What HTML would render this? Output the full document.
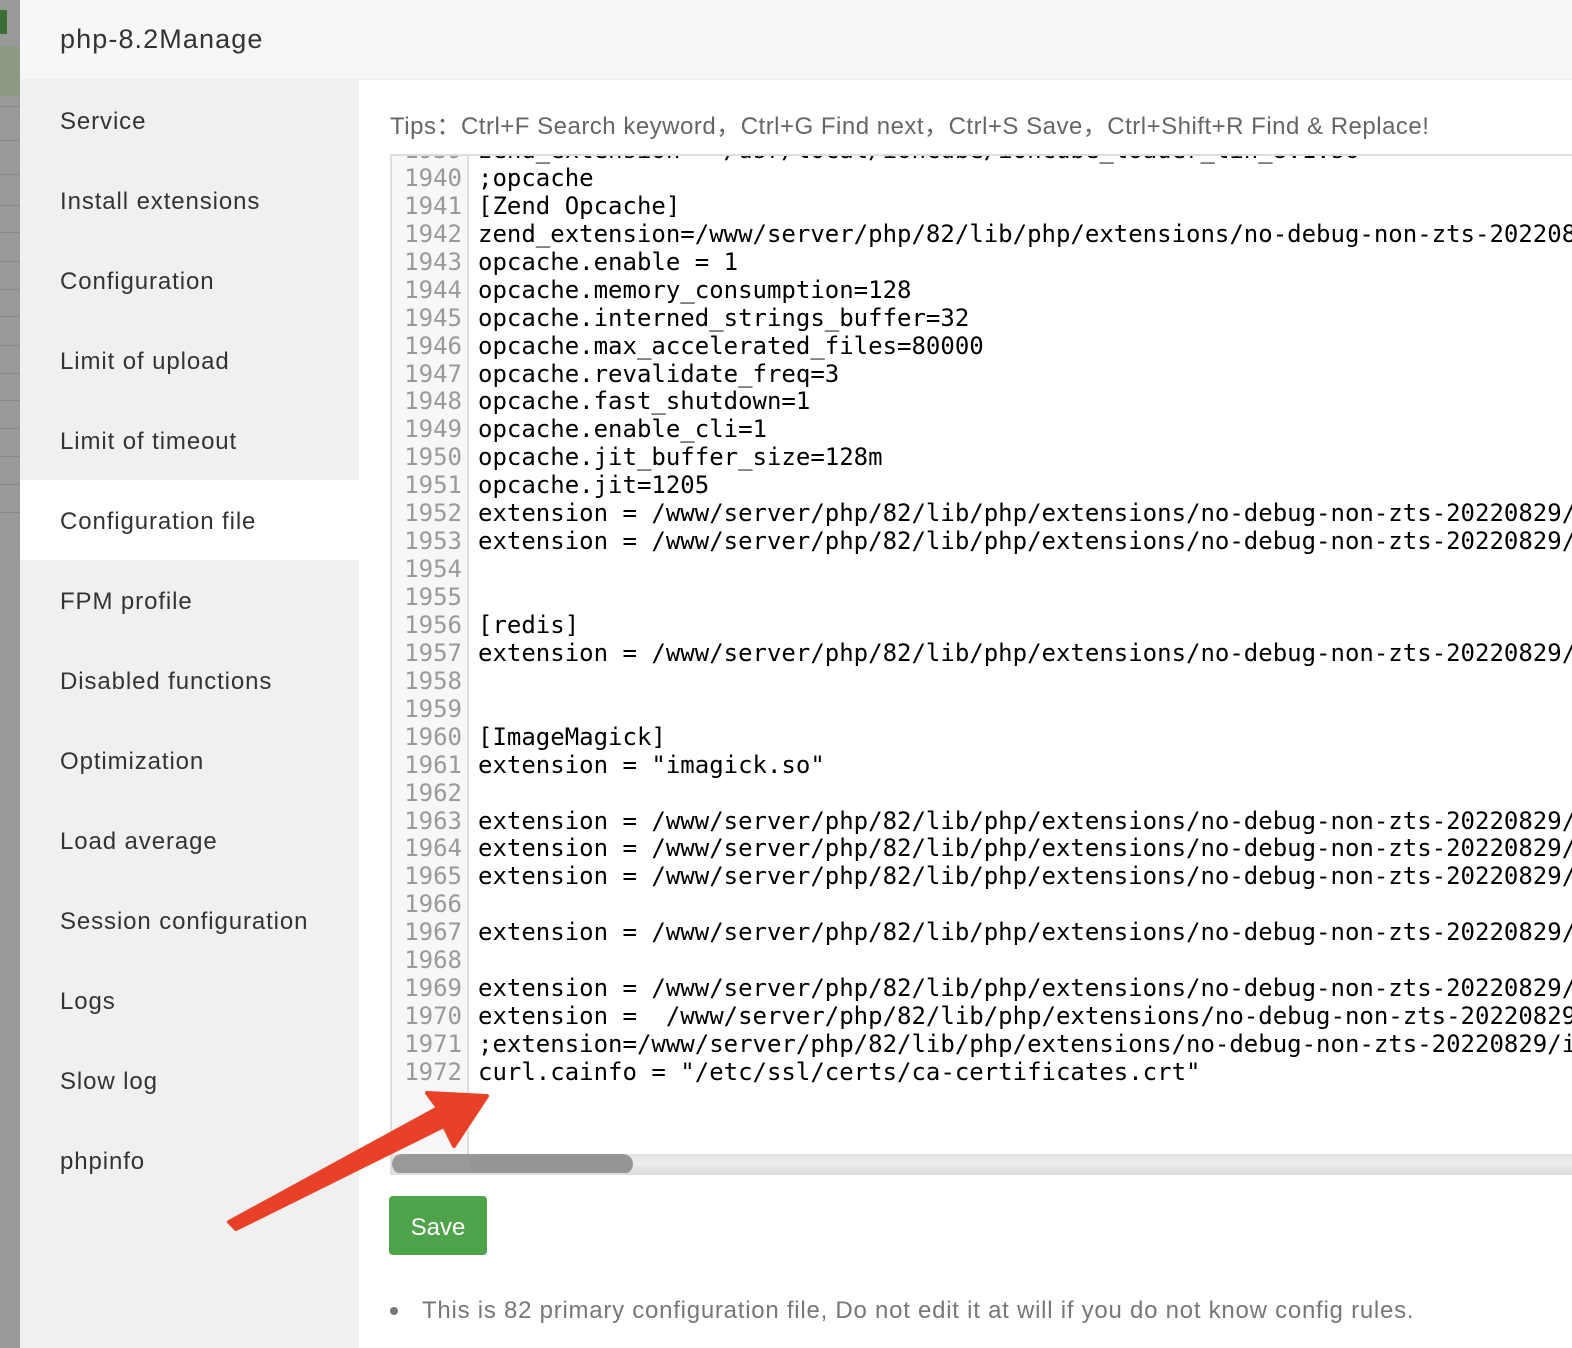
<!DOCTYPE html>
<html><head><meta charset="utf-8"><style>
*{margin:0;padding:0;box-sizing:border-box}
body{width:1572px;height:1348px;overflow:hidden;position:relative;background:#fff;font-family:"Liberation Sans",sans-serif}
#strip{position:absolute;left:0;top:0;width:20px;height:1348px;background:#9a9a9a}
#strip div{position:absolute;left:0;width:20px;height:1px;background:#888}
#hdr{position:absolute;left:20px;top:0;width:1552px;height:80px;background:#f7f7f7;border-bottom:1px solid #eee}
#hdr span{position:absolute;left:40px;top:24px;font-size:27px;letter-spacing:1.1px;color:#333}
#side{position:absolute;left:20px;top:80px;width:339px;height:1268px;background:#f0f0f0}
#side div{height:80px;line-height:84px;padding-left:40px;font-size:24px;letter-spacing:0.9px;color:#333}
#side div.on{background:#fff}
#tips{position:absolute;left:390px;top:106px;font-size:24px;letter-spacing:0.5px;color:#666;white-space:pre}
#ed{position:absolute;left:390px;top:154px;width:1200px;height:1021px;border:2px solid #ddd;border-right:none;overflow:hidden;background:#fff}
#gut{position:absolute;left:0;top:0;width:77px;height:1000px;background:#f7f7f7;border-right:2px solid #ddd}
#code{position:absolute;left:0;top:-19px;font-family:"DejaVu Sans Mono","Liberation Mono",monospace;font-size:24px;line-height:27.94px;white-space:pre}
#code .n{display:inline-block;width:70px;text-align:right;color:#999;margin-right:16px}
#sb{position:absolute;left:0;top:998px;width:1200px;height:20px;background:linear-gradient(#e2e2e2,#ececec,#dcdcdc)}
#sb i{position:absolute;left:0;top:0;width:240px;height:20px;border-radius:10px;background:#999}
#sb b{position:absolute;left:78px;top:0;width:163px;height:20px;border-radius:10px;background:#959595}
#save{position:absolute;left:389px;top:1196px;width:98px;height:59px;background:#4fa34a;border-radius:4px;color:#fff;font-size:24px;text-align:center;line-height:64px}
#note{position:absolute;left:422px;top:1297px;font-size:24px;letter-spacing:0.75px;color:#777}
#dot{position:absolute;left:390px;top:1307px;width:8px;height:8px;border-radius:50%;background:#777}
</style></head><body>
<div id="strip"><div style="top:0;height:120px;background:#999"></div><div style="top:10px;height:24px;width:7px;background:#3b6e34"></div><div style="top:46px;height:50px;background:#8c9a86"></div><div style="top:106px"></div><div style="top:140px"></div><div style="top:174px"></div><div style="top:205px"></div><div style="top:232px"></div><div style="top:261px"></div><div style="top:289px"></div><div style="top:316px"></div><div style="top:345px"></div><div style="top:373px"></div><div style="top:400px"></div><div style="top:428px"></div><div style="top:456px"></div><div style="top:484px"></div><div style="top:512px"></div></div>
<div id="hdr"><span>php-8.2Manage</span></div>
<div id="side">
<div>Service</div><div>Install extensions</div><div>Configuration</div><div>Limit of upload</div><div>Limit of timeout</div><div class="on">Configuration file</div><div>FPM profile</div><div>Disabled functions</div><div>Optimization</div><div>Load average</div><div>Session configuration</div><div>Logs</div><div>Slow log</div><div>phpinfo</div>
</div>
<div id="tips">Tips：Ctrl+F Search keyword，Ctrl+G Find next，Ctrl+S Save，Ctrl+Shift+R Find &amp; Replace!</div>
<div id="ed"><div id="gut"></div><div id="code"><span class="n">1939</span>zend_extension = /usr/local/ioncube/ioncube_loader_lin_8.1.so
<span class="n">1940</span>;opcache
<span class="n">1941</span>[Zend Opcache]
<span class="n">1942</span>zend_extension=/www/server/php/82/lib/php/extensions/no-debug-non-zts-20220829/opcache.so
<span class="n">1943</span>opcache.enable = 1
<span class="n">1944</span>opcache.memory_consumption=128
<span class="n">1945</span>opcache.interned_strings_buffer=32
<span class="n">1946</span>opcache.max_accelerated_files=80000
<span class="n">1947</span>opcache.revalidate_freq=3
<span class="n">1948</span>opcache.fast_shutdown=1
<span class="n">1949</span>opcache.enable_cli=1
<span class="n">1950</span>opcache.jit_buffer_size=128m
<span class="n">1951</span>opcache.jit=1205
<span class="n">1952</span>extension = /www/server/php/82/lib/php/extensions/no-debug-non-zts-20220829/fileinfo.so
<span class="n">1953</span>extension = /www/server/php/82/lib/php/extensions/no-debug-non-zts-20220829/exif.so
<span class="n">1954</span>
<span class="n">1955</span>
<span class="n">1956</span>[redis]
<span class="n">1957</span>extension = /www/server/php/82/lib/php/extensions/no-debug-non-zts-20220829/redis.so
<span class="n">1958</span>
<span class="n">1959</span>
<span class="n">1960</span>[ImageMagick]
<span class="n">1961</span>extension = "imagick.so"
<span class="n">1962</span>
<span class="n">1963</span>extension = /www/server/php/82/lib/php/extensions/no-debug-non-zts-20220829/intl.so
<span class="n">1964</span>extension = /www/server/php/82/lib/php/extensions/no-debug-non-zts-20220829/xsl.so
<span class="n">1965</span>extension = /www/server/php/82/lib/php/extensions/no-debug-non-zts-20220829/sodium.so
<span class="n">1966</span>
<span class="n">1967</span>extension = /www/server/php/82/lib/php/extensions/no-debug-non-zts-20220829/apcu.so
<span class="n">1968</span>
<span class="n">1969</span>extension = /www/server/php/82/lib/php/extensions/no-debug-non-zts-20220829/mongodb.so
<span class="n">1970</span>extension =  /www/server/php/82/lib/php/extensions/no-debug-non-zts-20220829/swoole.so
<span class="n">1971</span>;extension=/www/server/php/82/lib/php/extensions/no-debug-non-zts-20220829/imap.so
<span class="n">1972</span>curl.cainfo = "/etc/ssl/certs/ca-certificates.crt"</div>
<div id="sb"><i></i><b></b></div></div>
<svg style="position:absolute;left:0;top:0" width="1572" height="1348"><path d="M229 1222 L236 1229 L444 1126 L454 1146 L487 1096 L427 1093 L438 1108 Z" fill="#e94128" stroke="#e94128" stroke-width="4" stroke-linejoin="round"/></svg>
<div id="save">Save</div>
<div id="dot"></div>
<div id="note">This is 82 primary configuration file, Do not edit it at will if you do not know config rules.</div>
</body></html>
